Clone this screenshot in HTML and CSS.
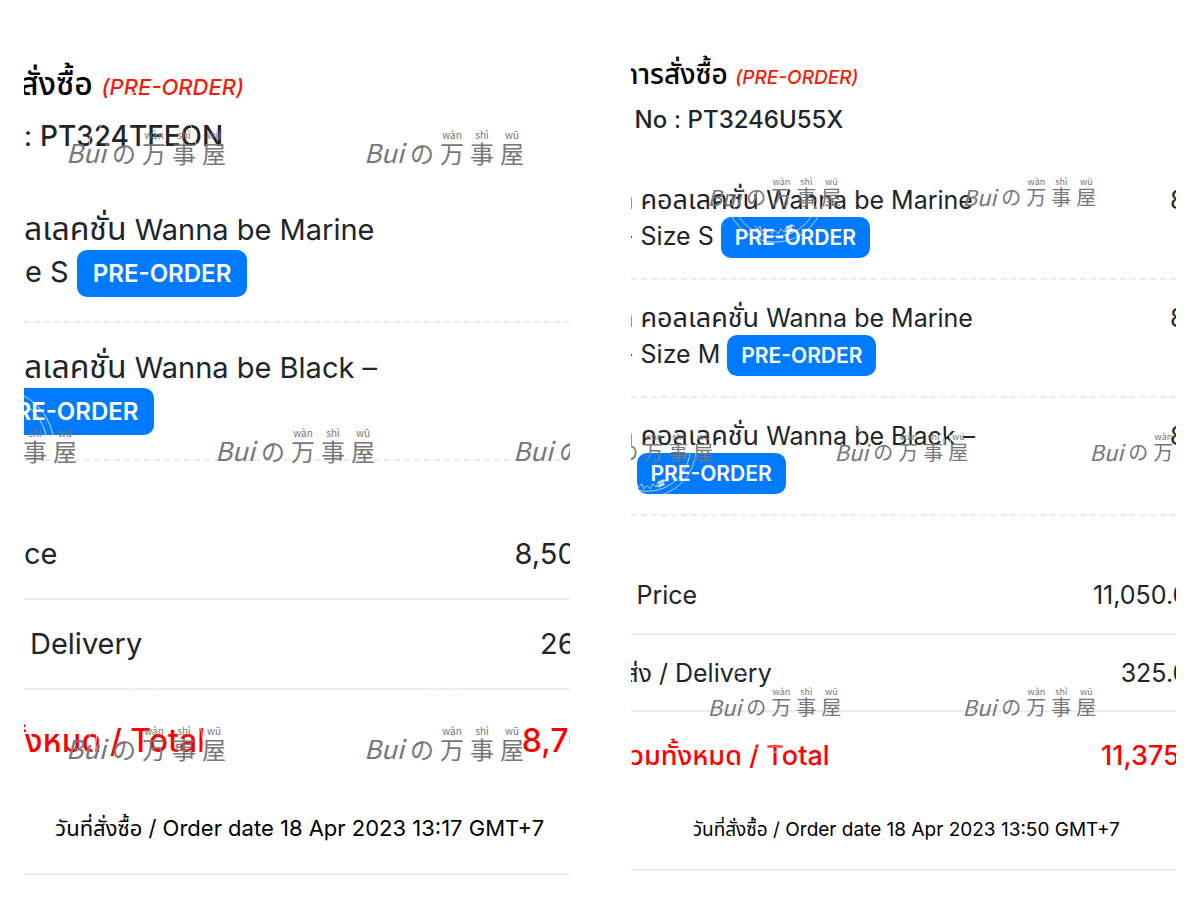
FILE: index.html
```
<!DOCTYPE html>
<html lang="th">

<head>
    <meta charset="utf-8">
    <meta name="viewport" content="width=device-width, initial-scale=1.0">
    <title>Order summary</title>
    <link rel="stylesheet" href="styles.css">
</head>

<body>
    <main class="orders">
        <article class="order order-large">
            <h1>สั่งซื้อ <em>(PRE-ORDER)</em></h1>
            <p class="number">: <b>PT324TFEON</b></p>
            <ul class="items">
                <li>
                    <div class="name"><span class="thai">ลเลคชั่น</span> Wanna be Marine<br><span class="cut">z</span>e S <span class="badge">PRE-ORDER</span></div>
                </li>
                <li>
                    <div class="name"><span class="thai">ลเลคชั่น</span> Wanna be Black –<br><span class="badge badge-cut">PRE-ORDER</span></div>
                </li>
            </ul>
            <table>
                <tr>
                    <th>ce</th>
                    <td>8,500.00</td>
                </tr>
                <tr>
                    <th class="gap">Delivery</th>
                    <td>260.00</td>
                </tr>
                <tr class="total">
                    <th><span class="cut">ทั้</span>งหมด / Total</th>
                    <td>8,760.0</td>
                </tr>
            </table>
            <p class="date">วันที่สั่งซื้อ / Order date 18 Apr 2023 13:17 GMT+7</p>
            <div class="marks" aria-hidden="true"></div>
        </article>

        <article class="order order-small">
            <h1><span class="cut cut-wide">ก</span>ารสั่งซื้อ <em>(PRE-ORDER)</em></h1>
            <p class="number"><b>No</b> : <b>PT3246U55X</b></p>
            <ul class="items">
                <li>
                    <div class="name"><span class="cut">า</span> <span class="thai">คอลเลคชั่น</span> Wanna be Marine<br><span class="cut">-</span> Size S <span class="badge">PRE-ORDER</span></div>
                    <span class="price">8</span>
                </li>
                <li>
                    <div class="name"><span class="cut">า</span> <span class="thai">คอลเลคชั่น</span> Wanna be Marine<br><span class="cut">-</span> Size M <span class="badge">PRE-ORDER</span></div>
                    <span class="price">8</span>
                </li>
                <li>
                    <div class="name"><span class="cut">า</span> <span class="thai">คอลเลคชั่น</span> Wanna be Black –<br><span class="badge badge-first">PRE-ORDER</span></div>
                    <span class="price">8</span>
                </li>
            </ul>
            <table>
                <tr>
                    <th class="gap">Price</th>
                    <td>11,050.00</td>
                </tr>
                <tr>
                    <th><span class="cut cut-wide">ส่</span>ง / Delivery</th>
                    <td>325.00</td>
                </tr>
                <tr class="total">
                    <th>วมทั้งหมด / Total</th>
                    <td>11,375.0</td>
                </tr>
            </table>
            <p class="date">วันที่สั่งซื้อ / Order date 18 Apr 2023 13:50 GMT+7</p>
            <div class="marks" aria-hidden="true"></div>
        </article>
    </main>
    <script>
        // the same watermark is repeated in three rows, the middle one shifted by half a step
        const mark = `<div class="mark">
            <svg class="stamp" viewBox="0 0 120 120">
                <circle cx="60" cy="60" r="59"/><circle cx="60" cy="60" r="52"/>
                <path d="M36 99l3 5 3-4 2 6 4-4 1 6 5-5 2 6 4-4 4 4 3-6 4 4 3-6 4 3 2-6 4 2"/>
                <path class="bold" d="M73 106l8-3m-8-1l8-3"/>
            </svg>
            <span class="bui">Bui</span><span>の</span>
            <ruby>万<rt>wàn</rt></ruby><ruby>事<rt>shì</rt></ruby><ruby>屋<rt>wū</rt></ruby>
        </div>`;

        document.querySelectorAll(".marks").forEach(marks => {
            ["first", "second", "third"].forEach(name => {
                const row = document.createElement("div");
                row.className = "row " + name;
                row.innerHTML = mark.repeat(name == "second" ? 3 : 2);
                marks.appendChild(row);
            });
        });
    </script>
</body>

</html>
```
FILE: styles.css
```
/****GENERAL****/

body {
    margin: 0;
    background-color: #fefefe;
    color: #212529;
    font-family: Inter, "Noto Sans Thai", "Noto Sans", sans-serif;
}

h1,
p,
ul {
    margin: 0;
    padding: 0;
}

b {
    font-weight: 500;
}

.orders {
    display: grid;
    grid-template-columns: 1fr 1fr;
    gap: 61px;
    padding: 0 24px;
}

/****ORDER****/

.order {
    position: relative;
    overflow: hidden;
    white-space: nowrap;
    font-size: var(--text);
    line-height: var(--line);
}

.order-large {
    --text: 29px;
    --title: 32px;
    --thai: 32px;
    --number: 28px;
    --badge: 24px;
    --small: 22px;
    --line: 42px;
    --head: 53px;
    --top: 24px;
    --bottom: 28px;
    --space: 48px;
    --row: 90px;
    --total: 102px;
    --total-text: 32px;
    --date: 74px;
    --cut: 1px;
    --over: 68px;
    padding-top: 57px;
}

.order-small {
    --text: 25px;
    --title: 28px;
    --thai: 27px;
    --number: 24px;
    --badge: 21px;
    --small: 19px;
    --line: 36px;
    --head: 45px;
    --top: 20px;
    --bottom: 24px;
    --space: 41px;
    --row: 77px;
    --total: 88px;
    --total-text: 27px;
    --date: 62px;
    --cut: 3px;
    --over: 28px;
    padding-top: 52px;
}

h1 {
    color: #000;
    font-size: var(--title);
    font-weight: 500;
    line-height: var(--head);
}

.order-large h1 {
    text-indent: -4px;
}

h1 em {
    color: #f21c0d;
    font-size: var(--small);
    font-weight: 500;
    line-height: 1;
}

.number {
    margin-bottom: 22px;
    font-size: var(--number);
    line-height: var(--head);
}

.order-small .number {
    margin-bottom: 20px;
    padding-left: 4px;
}

.cut {
    display: inline-flex;
    justify-content: flex-end;
    width: var(--cut);
    line-height: 1;
}

.cut-wide {
    width: 8px;
}

.thai {
    font-size: var(--thai);
    line-height: 1;
}

/****ITEMS****/

.items {
    list-style: none;
}

.items li {
    display: flex;
    justify-content: space-between;
    padding: var(--top) 0 var(--bottom);
    border-bottom: 2px dashed #ececec;
}

.price {
    width: 6px;
}

.badge {
    padding: 9px 16px;
    border-radius: 10px;
    background-color: #007bff;
    color: #fff;
    font-size: var(--badge);
    font-weight: 600;
    line-height: 1;
}

.order-small .badge {
    padding: 8px 14px;
}

.badge-cut {
    margin-left: -40px;
}

.badge-first {
    margin-left: 6px;
}

/****TOTALS****/

table {
    width: calc(100% + var(--over));
    margin-top: var(--space);
    border-collapse: collapse;
}

th,
td {
    height: var(--row);
    padding: 0;
    box-sizing: border-box;
    border-bottom: 2px solid #ececec;
    font-weight: 400;
    text-align: left;
}

td {
    text-align: right;
}

.gap {
    padding-left: 6px;
}

.total th,
.total td {
    height: var(--total);
    border: none;
    color: #f00;
    font-size: var(--total-text);
    font-weight: 500;
}

.date {
    padding: 0 0 8px 6px;
    border-bottom: 2px solid #ececec;
    color: #000;
    font-size: var(--small);
    line-height: var(--date);
    text-align: center;
}

/****WATERMARKS****/

.marks {
    --mark: 24px;
    --bui: 26px;
    --ruby: 10px;
    --gap: 6px;
    --step: 298px;
    --height: 34px;
    --stamp: 116px;
    position: absolute;
    inset: 0;
    overflow: hidden;
    color: #777;
    font-family: "Noto Sans CJK JP", sans-serif;
    font-size: var(--mark);
    line-height: 1;
}

.order-small .marks {
    --mark: 20px;
    --bui: 22px;
    --ruby: 9px;
    --gap: 5px;
    --step: 255px;
    --height: 29px;
    --stamp: 100px;
}

.row {
    position: absolute;
    top: 131px;
    left: 42px;
    display: grid;
    grid-auto-flow: column;
    grid-auto-columns: var(--step);
}

.order-small .row {
    top: 178px;
    left: 77px;
}

.row.second {
    left: -107px;
    margin-top: var(--step);
}

.order-small .row.second {
    left: -51px;
}

.row.third {
    margin-top: calc(var(--step) * 2);
}

.mark {
    position: relative;
    isolation: isolate;
    display: flex;
    align-items: flex-end;
    gap: var(--gap);
    width: calc(var(--mark) * 6 + 15px);
    height: var(--height);
}

.bui {
    font-size: var(--bui);
    font-style: italic;
}

rt {
    font-size: var(--ruby);
}

/* sits under its own watermark but over the order */
.stamp {
    position: absolute;
    top: 50%;
    left: 50%;
    width: var(--stamp);
    height: var(--stamp);
    margin: calc(var(--stamp) / -2);
    fill: none;
    stroke: #fff;
    opacity: 0.8;
    z-index: -1;
}

.stamp .bold {
    stroke-width: 3;
}
```
